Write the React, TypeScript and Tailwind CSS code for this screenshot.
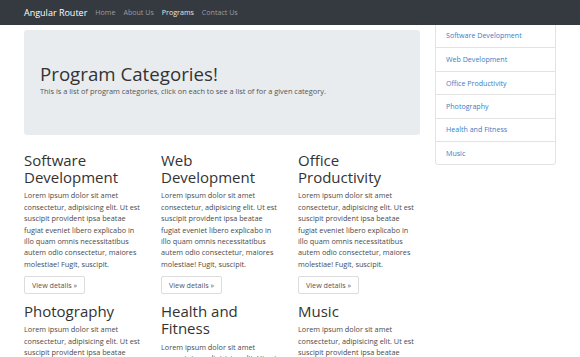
import React from 'react';

const lorem =
  'Lorem ipsum dolor sit amet consectetur, adipisicing elit. Ut est suscipit provident ipsa beatae fugiat eveniet libero explicabo in illo quam omnis necessitatibus autem odio consectetur, maiores molestiae! Fugit, suscipit.';

const categories = [
  'Software Development',
  'Web Development',
  'Office Productivity',
  'Photography',
  'Health and Fitness',
  'Music',
];

const font = { fontFamily: '"Segoe UI", "Open Sans", "Noto Sans", sans-serif' };

const ProgramCard = ({ title }: { title: string }) => (
  <div className="flex flex-col items-start mb-[9px]">
    <h2 className="text-[15px] leading-[17.2px] text-[#333] mb-[4px]">{title}</h2>
    <p className="text-[7.3px] leading-[11.4px] text-[#4a4a4a] mb-[6px]">{lorem}</p>
    <button className="h-[18px] px-[7px] border border-[#dcdcdc] rounded-[2px] text-[7.2px] text-[#555] bg-white">
      View details &raquo;
    </button>
  </div>
);

export default function App() {
  return (
    <div className="h-[357px] overflow-hidden bg-white" style={font}>
      {/* Navbar */}
      <nav className="relative z-10 h-[25px] bg-[#343a40] flex items-center px-[24px]">
        <span className="text-[9px] text-white mr-[8px]">Angular Router</span>
        <div className="flex gap-[8px] text-[7.1px]">
          <span className="text-[#9a9da0]">Home</span>
          <span className="text-[#9a9da0]">About Us</span>
          <span className="text-[#e4e5e6]">Programs</span>
          <span className="text-[#9a9da0]">Contact Us</span>
        </div>
      </nav>

      <div className="flex gap-[15px] px-[24px]">
        {/* Main column */}
        <main className="w-[396px] pt-[5px]">
          <div className="h-[105px] bg-[#e9ecef] rounded-[3px] px-[16px] pt-[32px]">
            <h1 className="text-[18.7px] leading-[23px] text-[#333]">Program Categories!</h1>
            <p className="text-[7.4px] leading-[12px] text-[#555]">
              This is a list of program categories, click on each to see a list of for a given category.
            </p>
          </div>

          <div className="grid grid-cols-[119px_119px_119px] gap-x-[18px] mt-[17px]">
            {categories.map((c) => (
              <ProgramCard key={c} title={c} />
            ))}
          </div>
        </main>

        {/* Sidebar list */}
        <aside className="w-[121px] -mt-[2px]">
          <ul className="border border-[#e3e3e3] rounded-b-[3px]">
            {categories.map((c, i) => (
              <li
                key={c}
                className={`h-[23.4px] flex items-center px-[10px] text-[7.1px] text-[#3b7dc4] ${
                  i > 0 ? 'border-t border-[#e3e3e3]' : ''
                }`}
              >
                {c}
              </li>
            ))}
          </ul>
        </aside>
      </div>
    </div>
  );
}
